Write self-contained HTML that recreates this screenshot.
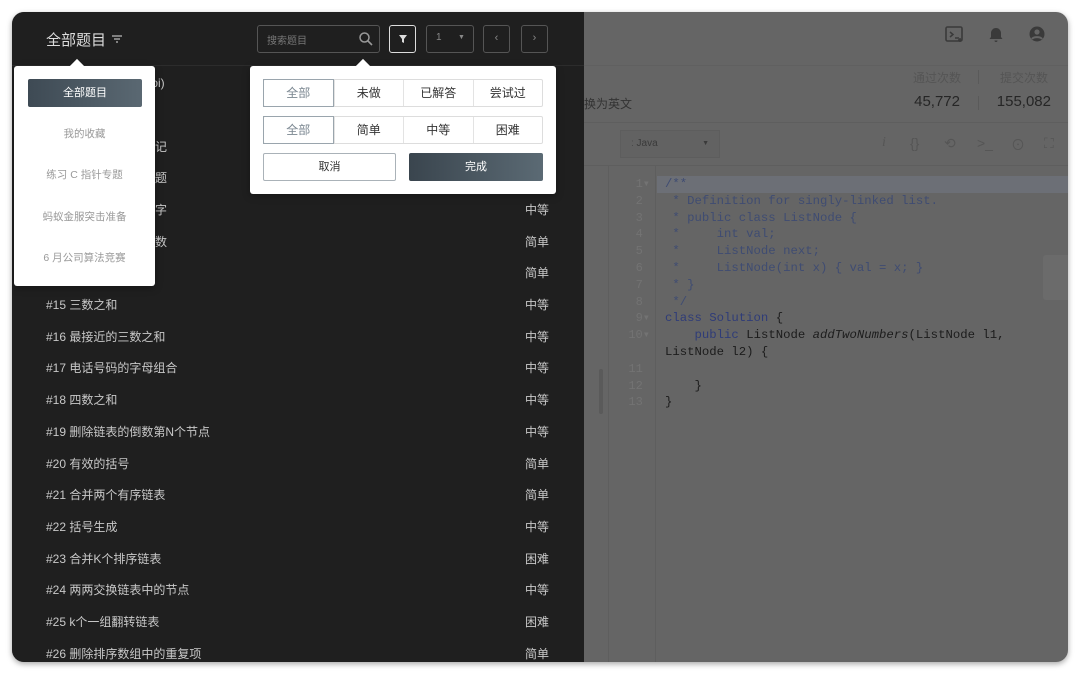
<!DOCTYPE html>
<html><head><meta charset="utf-8"><style>
*{margin:0;padding:0;box-sizing:border-box}
body{width:1080px;height:675px;background:#fff;font-family:"Liberation Sans","Noto Sans CJK SC",sans-serif;position:relative;overflow:hidden}
.card{position:absolute;left:12px;top:12px;width:1056px;height:650px;border-radius:12px;overflow:hidden;background:#656565;box-shadow:0 2px 6px rgba(0,0,0,.35)}
.left{position:absolute;left:0;top:0;width:572px;height:650px;background:#1f1f1f}
.abs{position:absolute}
.row{position:absolute;left:34px;width:503px;font-size:12px;color:#c8c8c8;height:20px;line-height:20px}
.row span{position:absolute;right:0;top:0}
.box{position:absolute;border:1px solid #555;border-radius:3px;height:28px;top:13px}
.pop{position:absolute;background:#fff;border-radius:3px;box-shadow:0 2px 8px rgba(0,0,0,.3)}
.seg{position:absolute;display:flex;border:1px solid #ddd;border-radius:2px;height:28px}
.seg div{flex:1;text-align:center;line-height:26px;font-size:12px;color:#333;border-left:1px solid #e3e3e3}
.seg div:first-child{border:1px solid #9aa5ad;color:#7a8690;margin:-1px 0 -1px -1px}
.code{font-family:"Liberation Mono",monospace;font-size:12.3px;line-height:16.8px;color:#1c1c1c;white-space:pre}
.cm{color:#3f4c72}.kw{color:#2f3c78}
.ln{font-family:"Liberation Mono",monospace;font-size:12px;line-height:16.8px;color:#737373;text-align:right;white-space:pre}
</style></head><body>
<div class="card">
 <!-- right side -->
 <div class="abs" style="left:572px;top:110px;width:484px;height:1px;background:#5e5e5e"></div>
 <div class="abs" style="left:572px;top:53px;width:484px;height:1px;background:#606060"></div>
 <div class="abs" style="left:572px;top:153px;width:484px;height:1px;background:#5e5e5e"></div>
 <svg class="abs" style="left:932px;top:12px" width="110" height="22" viewBox="0 0 110 22">
  <rect x="2" y="3" width="16" height="14" rx="1.5" fill="none" stroke="#3a3a3a" stroke-width="1.6"/><path d="M6 8l3 2.5-3 2.5M11 14h4M16 14v4M14 16h4" stroke="#3a3a3a" stroke-width="1.5" fill="none"/>
  <path d="M52 4c-3 0-5 2.5-5 5v4l-1.5 2h13l-1.5-2v-4c0-2.5-2-5-5-5z M50.5 16.5a1.5 1.5 0 0 0 3 0z" fill="#3a3a3a"/>
  <circle cx="93" cy="10" r="7.5" fill="#3a3a3a"/><circle cx="93" cy="8" r="2.6" fill="#656565"/><path d="M88 15c1.5-2.5 8.5-2.5 10 0" stroke="#656565" stroke-width="2" fill="none"/>
 </svg>
 <div class="abs" style="left:901px;top:57px;font-size:12px;color:#555">通过次数</div>
 <div class="abs" style="left:966px;top:58px;width:1px;height:14px;background:#5a5a5a"></div>
 <div class="abs" style="left:988px;top:57px;font-size:12px;color:#555">提交次数</div>
 <div class="abs" style="left:572px;top:83px;font-size:12px;color:#333">换为英文</div>
 <div class="abs" style="left:900px;top:81px;font-size:15px;color:#262626;width:48px;text-align:right">45,772</div>
 <div class="abs" style="left:966px;top:84px;width:1px;height:14px;background:#5a5a5a"></div>
 <div class="abs" style="left:980px;top:81px;font-size:15px;color:#262626;width:59px;text-align:right">155,082</div>
 <div class="abs" style="left:608px;top:118px;width:100px;height:28px;background:#626262;border:1px solid #5d5d5d;font-size:10px;color:#3a3a3a;line-height:26px;padding-left:10px">ː Java<span style="position:absolute;right:10px;font-size:7px">▼</span></div>
 <div class="abs" style="left:866px;top:123px;font-size:14px;color:#555"><span style="position:absolute;left:4px;font-style:italic;font-family:'Liberation Serif'">i</span><span style="position:absolute;left:32px">{}</span><span style="position:absolute;left:66px">⟲</span><span style="position:absolute;left:99px">&gt;_</span><span style="position:absolute;left:133px">⊙</span><span style="position:absolute;left:166px">⛶</span></div>
 <div class="abs" style="left:596px;top:154px;width:1px;height:496px;background:#5e5e5e"></div>
 <div class="abs" style="left:643px;top:154px;width:1px;height:496px;background:#5e5e5e"></div>
 <div class="abs" style="left:587px;top:357px;width:4px;height:45px;background:#5a5a5a;border-radius:2px"></div>
 <div class="abs" style="left:645px;top:164px;width:411px;height:17px;background:#6c6f76"></div>
 <div class="abs" style="left:1031px;top:243px;width:25px;height:45px;background:#6b6b6b;border-radius:3px 0 0 3px"></div>
 <div class="abs ln" style="left:600px;top:164px;width:38px">1▾
2 
3 
4 
5 
6 
7 
8 
9▾
10▾

11 
12 
13 </div>
 <div class="abs code" style="left:653px;top:164px"><span class="cm">/**
 * Definition for singly-linked list.
 * public class ListNode {
 *     int val;
 *     ListNode next;
 *     ListNode(int x) { val = x; }
 * }
 */</span>
<span class="kw">class Solution</span> {
    <span class="kw">public</span> ListNode <i>addTwoNumbers</i>(ListNode l1,
ListNode l2) {

    }
}</div>

 <!-- left panel -->
 <div class="left">
  <div class="abs" style="left:34px;top:17px;font-size:15px;color:#ddd">全部题目</div>
  <svg class="abs" style="left:99px;top:22px" width="12" height="10"><path d="M1 2h10M3 5h6M5 8h2" stroke="#bbb" stroke-width="1.3"/></svg>
  <div class="box" style="left:245px;width:123px"><span class="abs" style="left:9px;top:6px;font-size:10px;color:#777">搜索题目</span>
   <svg class="abs" style="left:100px;top:5px" width="16" height="16"><circle cx="6.5" cy="6.5" r="4.5" stroke="#999" stroke-width="1.5" fill="none"/><path d="M10 10l4 4" stroke="#999" stroke-width="1.6"/></svg></div>
  <div class="box" style="left:377px;width:27px;border-color:#ddd"><svg class="abs" style="left:7px;top:7px" width="12" height="12"><path d="M2 2h8L7 6v4L5 9V6z" fill="#ddd"/></svg></div>
  <div class="box" style="left:414px;width:48px"><span class="abs" style="left:9px;top:6px;font-size:10px;color:#888">1</span><span class="abs" style="left:31px;top:8px;font-size:7px;color:#888">▼</span></div>
  <div class="box" style="left:471px;width:27px;text-align:center;line-height:25px;font-size:11px;color:#888">‹</div>
  <div class="box" style="left:509px;width:27px;text-align:center;line-height:25px;font-size:11px;color:#888">›</div>
  <div class="abs" style="left:0;top:53px;width:572px;height:1px;background:#2c2c2c"></div>
  <div class="row" style="top:61px;left:136px;width:30px">toi)</div>
  <div class="row" style="top:125px;left:143px;width:20px">记</div>
  <div class="row" style="top:156px;left:143px;width:20px">题</div>
  <div class="row" style="top:188px">&nbsp;<b style="position:absolute;left:109px;font-weight:normal">字</b><span>中等</span></div>
  <div class="row" style="top:220px">&nbsp;<b style="position:absolute;left:109px;font-weight:normal">数</b><span>简单</span></div>
  <div class="row" style="top:251px"><span>简单</span></div>
  <div class="row" style="top:283px">#15 三数之和<span>中等</span></div>
  <div class="row" style="top:315px">#16 最接近的三数之和<span>中等</span></div>
  <div class="row" style="top:346px">#17 电话号码的字母组合<span>中等</span></div>
  <div class="row" style="top:378px">#18 四数之和<span>中等</span></div>
  <div class="row" style="top:410px">#19 删除链表的倒数第N个节点<span>中等</span></div>
  <div class="row" style="top:442px">#20 有效的括号<span>简单</span></div>
  <div class="row" style="top:473px">#21 合并两个有序链表<span>简单</span></div>
  <div class="row" style="top:505px">#22 括号生成<span>中等</span></div>
  <div class="row" style="top:537px">#23 合并K个排序链表<span>困难</span></div>
  <div class="row" style="top:568px">#24 两两交换链表中的节点<span>中等</span></div>
  <div class="row" style="top:600px">#25 k个一组翻转链表<span>困难</span></div>
  <div class="row" style="top:632px">#26 删除排序数组中的重复项<span>简单</span></div>
  <!-- popup 1 -->
  <div class="pop" style="left:2px;top:54px;width:141px;height:220px">
   <div class="abs" style="left:58px;top:-5px;width:10px;height:10px;background:#fff;transform:rotate(45deg)"></div>
   <div class="abs" style="left:14px;top:13px;width:114px;height:28px;border-radius:2px;background:linear-gradient(90deg,#3e4a54,#5a6872);color:#fff;font-size:11px;text-align:center;line-height:28px">全部题目</div>
   <div class="abs" style="left:0;top:60px;width:141px;text-align:center;font-size:10.5px;color:#999">我的收藏</div>
   <div class="abs" style="left:0;top:101px;width:141px;text-align:center;font-size:10.5px;color:#999">练习 C 指针专题</div>
   <div class="abs" style="left:0;top:143px;width:141px;text-align:center;font-size:10.5px;color:#999">蚂蚁金服突击准备</div>
   <div class="abs" style="left:0;top:184px;width:141px;text-align:center;font-size:10.5px;color:#999">6 月公司算法竞赛</div>
  </div>
  <!-- popup 2 -->
  <div class="pop" style="left:238px;top:54px;width:306px;height:128px">
   <div class="abs" style="left:108px;top:-5px;width:10px;height:10px;background:#fff;transform:rotate(45deg)"></div>
   <div class="seg" style="left:13px;top:13px;width:280px"><div>全部</div><div>未做</div><div>已解答</div><div>尝试过</div></div>
   <div class="seg" style="left:13px;top:50px;width:280px"><div>全部</div><div>简单</div><div>中等</div><div>困难</div></div>
   <div class="abs" style="left:13px;top:87px;width:133px;height:28px;border:1px solid #aab2b8;border-radius:2px;text-align:center;line-height:26px;font-size:11px;color:#333">取消</div>
   <div class="abs" style="left:159px;top:87px;width:134px;height:28px;border-radius:2px;background:linear-gradient(90deg,#3a454e,#5b6a74);text-align:center;line-height:28px;font-size:11px;color:#fff">完成</div>
  </div>
 </div>
</div>
</body></html>
